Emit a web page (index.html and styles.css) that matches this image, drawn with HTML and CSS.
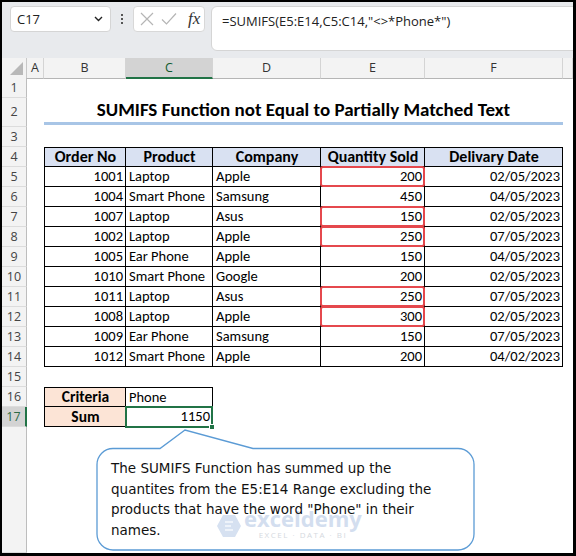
FILE: index.html
```html
<!DOCTYPE html>
<html>
<head>
<meta charset="utf-8">
<link rel="stylesheet" href="styles.css">
</head>
<body>
<div class="app">
  <div class="frame">
    <div class="toolbar">
      <div class="namebox"><span>C17</span>
        <svg class="chev" width="9" height="6" viewBox="0 0 9 6"><path d="M1 1 L4.5 4.5 L8 1" fill="none" stroke="#222" stroke-width="1.4"/></svg>
      </div>
      <div class="dots"><i></i><i></i><i></i></div>
      <div class="fxbox">
        <svg width="14" height="14" viewBox="0 0 14 14"><path d="M1 1 L13 13 M13 1 L1 13" stroke="#b5b5b5" stroke-width="1.2"/></svg>
        <svg width="16" height="14" viewBox="0 0 16 14"><path d="M1 7.5 L5.5 12 L15 1.5" fill="none" stroke="#b5b5b5" stroke-width="1.2"/></svg>
        <span class="fx">fx</span>
      </div>
      <div class="formula">=SUMIFS(E5:E14,C5:C14,"&lt;&gt;*Phone*")</div>
    </div>

    <div class="sheet">
      <div class="row hdr">
        <div class="corner"><svg width="13" height="13" viewBox="0 0 13 13"><path d="M13 0 L13 13 L0 13 Z" fill="#b8b8b8"/></svg></div>
        <div class="ch">A</div><div class="ch">B</div><div class="ch sel">C</div><div class="ch">D</div><div class="ch">E</div><div class="ch">F</div><div class="ch"></div>
      </div>
      <div class="row"><div class="rh">1</div></div>
      <div class="row r2"><div class="rh">2</div><div></div><div class="title"><span>SUMIFS Function not Equal to Partially Matched Text</span></div></div>
      <div class="row"><div class="rh">3</div></div>
      <div class="row"><div class="rh">4</div><div></div>
        <div class="c th first">Order No</div><div class="c th">Product</div><div class="c th">Company</div><div class="c th">Quantity Sold</div><div class="c th">Delivary Date</div>
      </div>
      <div class="row"><div class="rh">5</div><div></div><div class="c first r">1001</div><div class="c">Laptop</div><div class="c">Apple</div><div class="c r hl">200</div><div class="c r">02/05/2023</div></div>
      <div class="row"><div class="rh">6</div><div></div><div class="c first r">1004</div><div class="c">Smart Phone</div><div class="c">Samsung</div><div class="c r">450</div><div class="c r">04/05/2023</div></div>
      <div class="row"><div class="rh">7</div><div></div><div class="c first r">1007</div><div class="c">Laptop</div><div class="c">Asus</div><div class="c r hl">150</div><div class="c r">02/05/2023</div></div>
      <div class="row"><div class="rh">8</div><div></div><div class="c first r">1002</div><div class="c">Laptop</div><div class="c">Apple</div><div class="c r hl">250</div><div class="c r">07/05/2023</div></div>
      <div class="row"><div class="rh">9</div><div></div><div class="c first r">1005</div><div class="c">Ear Phone</div><div class="c">Apple</div><div class="c r">150</div><div class="c r">04/05/2023</div></div>
      <div class="row"><div class="rh">10</div><div></div><div class="c first r">1010</div><div class="c">Smart Phone</div><div class="c">Google</div><div class="c r">200</div><div class="c r">02/05/2023</div></div>
      <div class="row"><div class="rh">11</div><div></div><div class="c first r">1011</div><div class="c">Laptop</div><div class="c">Asus</div><div class="c r hl">250</div><div class="c r">07/05/2023</div></div>
      <div class="row"><div class="rh">12</div><div></div><div class="c first r">1008</div><div class="c">Laptop</div><div class="c">Apple</div><div class="c r hl">300</div><div class="c r">02/05/2023</div></div>
      <div class="row"><div class="rh">13</div><div></div><div class="c first r">1009</div><div class="c">Ear Phone</div><div class="c">Samsung</div><div class="c r">150</div><div class="c r">07/05/2023</div></div>
      <div class="row"><div class="rh">14</div><div></div><div class="c first r">1012</div><div class="c">Smart Phone</div><div class="c">Apple</div><div class="c r">200</div><div class="c r">04/02/2023</div></div>
      <div class="row"><div class="rh">15</div></div>
      <div class="row"><div class="rh">16</div><div></div><div class="c th2 first top">Criteria</div><div class="c top">Phone</div></div>
      <div class="row"><div class="rh sel">17</div><div></div><div class="c th2 first">Sum</div><div class="c r active">1150<span class="handle"></span></div></div>
      <div class="row rest"><div class="rh"></div></div>
    </div>
  </div>

  <svg class="bubble" width="576" height="556" viewBox="0 0 576 556">
    <path d="M113 448.5 L160 448.5 L185 430 L253 448.5 L458 448.5 A16 16 0 0 1 474 464.5 L474 534 A16 16 0 0 1 458 550 L113 550 A16 16 0 0 1 97 534 L97 464.5 A16 16 0 0 1 113 448.5 Z" fill="#fff" stroke="#5b9bd5" stroke-width="1.3"/>
  </svg>
  <div class="wm">
    <svg class="wm-logo" width="26" height="24" viewBox="0 0 26 24"><path d="M7 1 H19 L25 12 L19 23 H7 L1 12 Z" fill="#d6e1f1"/><path d="M9 8 H17 M9 12 H15 M9 16 H17" stroke="#eef3fa" stroke-width="2"/></svg>
    <div class="wm-txt"><span class="wm-big">exceldemy</span><span class="wm-small">EXCEL · DATA · BI</span></div>
  </div>
  <div class="note">The SUMIFS Function has summed up the<br>quantites from the E5:E14 Range excluding the<br>products that have the word "Phone" in their<br>names.</div>
</div>
</body>
</html>
```

FILE: styles.css
```css
* { box-sizing: border-box; }
body { margin: 0; }
.app {
  position: relative;
  width: 576px;
  height: 556px;
  background: #000;
  overflow: hidden;
}
.frame {
  position: absolute;
  left: 2px; top: 2px;
  width: 571px; height: 551px;
  background: #fff;
  overflow: hidden;
  display: flex;
  flex-direction: column;
}
.toolbar {
  height: 56px;
  flex: none;
  background: #e8eaed;
  display: flex;
  align-items: flex-start;
  padding: 4px 0 0 8px;
  font-family: "Open Sans", "Noto Sans", sans-serif;
  font-size: 13px;
  color: #222;
}
.namebox {
  width: 101px; height: 26px;
  background: #fff;
  border: 1px solid #d5d5d5;
  border-radius: 4px;
  display: flex;
  align-items: center;
  justify-content: space-between;
  padding: 0 7px 0 6px;
}
.dots {
  width: 22px; height: 26px;
  display: flex; flex-direction: column;
  align-items: center; justify-content: center;
  gap: 2px;
}
.dots i { width: 2px; height: 2px; background: #555; display: block; }
.fxbox {
  width: 72px; height: 26px;
  background: #fff;
  border: 1px solid #d8d8d8;
  border-radius: 4px;
  display: flex; align-items: center;
  padding-left: 6px; gap: 7px;
}
.fx {
  font-family: "Liberation Serif", serif;
  font-style: italic;
  font-size: 17px;
  color: #333;
  margin-left: 4px;
}
.formula {
  margin-left: 6px;
  flex: 1;
  height: 45px;
  margin-right: -8px;
  background: #fff;
  border: 1px solid #d5d5d5;
  border-radius: 6px;
  padding: 4px 10px;
  line-height: 20px;
}
.sheet {
  flex: 1;
  display: flex; flex-direction: column;
  font-family: "Carlito", "Lato", sans-serif;
  font-size: 14.5px;
  color: #000;
}
.row {
  display: grid;
  grid-template-columns: 25px 17px 82px 87px 108px 104px 138px 10px;
  height: 20px;
  flex: none;
}
.row.r2 { height: 29px; }
.row.rest { flex: 1; height: auto; }
.hdr { background: #f3f3f3; }
.corner {
  display: flex; align-items: flex-end; justify-content: flex-end;
  padding: 0 3px 3px 0;
  border-right: 1px solid #c8c8c8;
  border-bottom: 1px solid #b5b5b5;
}
.ch {
  border-right: 1px solid #d4d4d4;
  border-bottom: 1px solid #b5b5b5;
  text-align: center;
  font-family: "Open Sans", "Noto Sans", sans-serif;
  font-size: 12.5px;
  line-height: 19px;
  color: #333;
}
.ch.sel {
  background: #d3d3d3;
  border-bottom: 2px solid #217346;
  color: #0e5a2e;
}
.rh {
  background: #f3f3f3;
  border-right: 1px solid #bdbdbd;
  border-bottom: 1px solid #dcdcdc;
  text-align: center;
  font-family: "Open Sans", "Noto Sans", sans-serif;
  font-size: 12.5px;
  line-height: 19px;
  color: #444;
}
.r2 .rh { line-height: 28px; }
.rh.sel {
  background: #d3d3d3;
  border-right: 2px solid #217346;
  color: #2d6b45;
}
.title {
  grid-column: 3 / 8;
  border-bottom: 3px solid #a8c5e6;
  margin-bottom: 2px;
  text-align: center;
  font-weight: 700;
  font-size: 19px;
  line-height: 24px;
}
.c {
  position: relative;
  border-right: 1px solid #000;
  border-bottom: 1px solid #000;
  padding: 0 2px 0 3px;
  line-height: 19px;
  white-space: nowrap;
}
.c.first { border-left: 1px solid #000; }
.c.top { border-top: 1px solid #000; line-height: 18px; }
.c.r { text-align: right; }
.th {
  border-top: 1px solid #000;
  background: #d9e1f2;
  font-weight: 700;
  font-size: 16px;
  text-align: center;
  line-height: 18px;
}
.th2 {
  background: #fce4d6;
  font-weight: 700;
  font-size: 15.5px;
  text-align: center;
}
.hl::after {
  content: "";
  position: absolute;
  left: -1px; top: -1px; right: -1px; bottom: -1px;
  border: 2px solid #e5484d;
  border-radius: 3px;
}
.active::after {
  content: "";
  position: absolute;
  left: -1px; top: -1px; right: -1px; bottom: -2px;
  border: 2px solid #217346;
}
.handle {
  position: absolute;
  right: -3px; bottom: -4px;
  width: 6px; height: 6px;
  background: #217346;
  border: 1px solid #fff;
  z-index: 2;
}
.bubble {
  position: absolute;
  left: 0; top: 0;
}
.note {
  position: absolute;
  left: 111px; top: 458px;
  font-family: "DejaVu Sans", sans-serif;
  font-size: 13.5px;
  line-height: 20.5px;
  color: #111;
}
.wm {
  position: absolute;
  left: 216px; top: 506px;
  display: flex; align-items: center; gap: 2px;
}
.wm-logo { margin-top: 6px; }
.wm-txt { display: flex; flex-direction: column; align-items: center; }
.wm-big {
  font-family: "Open Sans", sans-serif;
  font-weight: 700;
  font-size: 22px;
  line-height: 24px;
  color: #d3deef;
}
.wm-small {
  font-family: "Open Sans", sans-serif;
  font-size: 8px;
  letter-spacing: 1.5px;
  color: #d5d9e0;
  line-height: 9px;
}
```
